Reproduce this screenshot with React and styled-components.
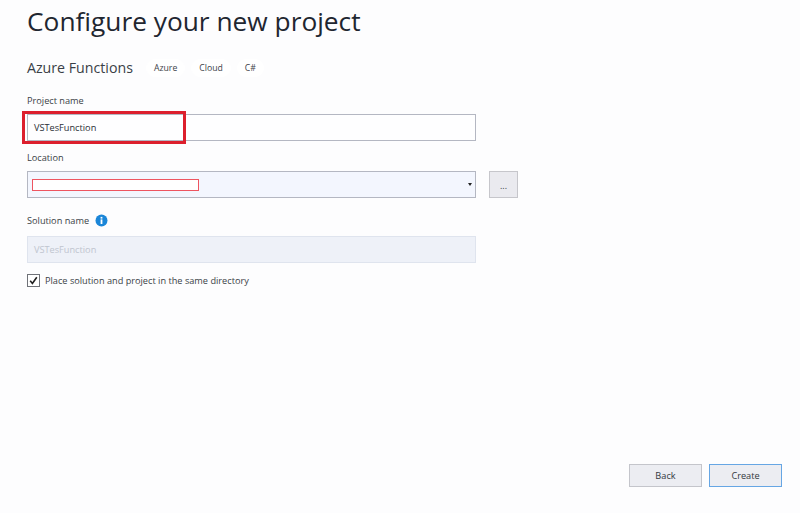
import React from "react";
import styled, { createGlobalStyle } from "styled-components";

const Global = createGlobalStyle`
  html, body { margin: 0; padding: 0; background: #fdfdfe; }
  #root { width: 800px; height: 513px; }
`;

const Page = styled.div`
  position: relative;
  box-sizing: border-box;
  width: 800px;
  height: 513px;
  padding: 0 18px 26px 27px;
  display: flex;
  flex-direction: column;
  font-family: "Open Sans", "Noto Sans", sans-serif;
  color: #2a2f36;
  overflow: hidden;
`;

const Title = styled.h1`
  margin: 0;
  height: 43px;
  line-height: 43px;
  font-size: 26.3px;
  font-weight: 400;
  color: #1f2630;
  white-space: nowrap;
`;

const TemplateRow = styled.div`
  display: flex;
  align-items: center;
  gap: 6px;
  height: 24px;
  margin-top: 13px;
`;

const TemplateName = styled.span`
  font-size: 14.2px;
  color: #3a3f46;
  margin-right: 7px;
  margin-bottom: 2px;
  white-space: nowrap;
`;

const Tag = styled.span`
  display: inline-flex;
  align-items: center;
  height: 18px;
  padding: 0 8px;
  border-radius: 9px;
  background: #fff;
  font-size: 8.7px;
  color: #3e434a;
`;

const Label = styled.div`
  display: flex;
  align-items: center;
  gap: 6px;
  height: 14px;
  margin-top: ${(p) => p.$top}px;
  margin-bottom: ${(p) => p.$bottom}px;
  font-size: 9.2px;
  color: #3a3f46;
`;

const FieldRow = styled.div`
  display: flex;
  align-items: center;
  gap: 13px;
`;

const Field = styled.div`
  box-sizing: border-box;
  width: 449px;
  height: 27px;
  display: flex;
  align-items: center;
  padding: 0 6px;
  font-size: 9.2px;
  border: 1px solid ${(p) => (p.$disabled ? "#dfe4ee" : "#b4b7c2")};
  background: ${(p) => (p.$disabled ? "#eef1f8" : p.$tint ? "#f3f6fe" : "#fefeff")};
  color: ${(p) => (p.$disabled ? "#c0c5cf" : "#2a2f36")};
`;

const Redaction = styled.div`
  box-sizing: border-box;
  width: 167px;
  height: 12px;
  margin-left: -2px;
  margin-top: 1px;
  background: #fff;
  border: 1px solid #ee5560;
`;

const Caret = styled.span`
  margin-left: auto;
  margin-right: -3px;
  width: 0;
  height: 0;
  border-left: 2.5px solid transparent;
  border-right: 2.5px solid transparent;
  border-top: 3px solid #222;
`;

const BrowseButton = styled.div`
  box-sizing: border-box;
  width: 29px;
  height: 27px;
  display: flex;
  align-items: center;
  justify-content: center;
  padding-top: 3px;
  background: #eaeaef;
  border: 1px solid #c6c6cb;
  font-size: 8.8px;
  color: #3a3f46;
`;

const CheckRow = styled.div`
  display: flex;
  align-items: center;
  gap: 5px;
  margin-top: 11px;
  height: 13px;
  font-size: 9.2px;
  color: #3a3f46;
`;

const CheckBox = styled.span`
  box-sizing: border-box;
  width: 13px;
  height: 13px;
  display: flex;
  align-items: center;
  justify-content: center;
  background: #fff;
  border: 1px solid #6f7278;
`;

const Footer = styled.div`
  margin-top: auto;
  display: flex;
  justify-content: flex-end;
  gap: 7px;
`;

const Button = styled.div`
  box-sizing: border-box;
  width: 73px;
  height: 23px;
  display: flex;
  align-items: center;
  justify-content: center;
  background: #ecedf2;
  border: 1px solid ${(p) => (p.$primary ? "#66a6e4" : "#c4c5cb")};
  font-size: 9.2px;
  color: #333840;
`;

const Highlight = styled.div`
  position: absolute;
  left: 22px;
  top: 111px;
  box-sizing: border-box;
  width: 164px;
  height: 33px;
  border: 3px solid #dc1f2d;
`;

export default function App() {
  return (
    <>
      <Global />
      <Page>
        <Title>Configure your new project</Title>
        <TemplateRow>
          <TemplateName>Azure Functions</TemplateName>
          <Tag>Azure</Tag>
          <Tag>Cloud</Tag>
          <Tag>C#</Tag>
        </TemplateRow>
        <Label $top={13} $bottom={7}>Project name</Label>
        <Field>VSTesFunction</Field>
        <Label $top={9} $bottom={7}>Location</Label>
        <FieldRow>
          <Field $tint>
            <Redaction />
            <Caret />
          </Field>
          <BrowseButton>...</BrowseButton>
        </FieldRow>
        <Label $top={15} $bottom={9}>
          Solution name
          <svg width="13" height="13" viewBox="0 0 13 13" aria-hidden="true">
            <circle cx="6.5" cy="6.5" r="6" fill="#1b86d8" />
            <rect x="5.6" y="5.4" width="1.8" height="4.6" fill="#fff" />
            <rect x="5.6" y="2.9" width="1.8" height="1.7" fill="#fff" />
          </svg>
        </Label>
        <Field $disabled>VSTesFunction</Field>
        <CheckRow>
          <CheckBox>
            <svg width="9" height="9" viewBox="0 0 9 9" aria-hidden="true">
              <path d="M1.2 4.8 L3.4 7.4 L7.8 1.2" fill="none" stroke="#1f1f1f" strokeWidth="1.6" />
            </svg>
          </CheckBox>
          Place solution and project in the same directory
        </CheckRow>
        <Footer>
          <Button>Back</Button>
          <Button $primary>Create</Button>
        </Footer>
        <Highlight />
      </Page>
    </>
  );
}
